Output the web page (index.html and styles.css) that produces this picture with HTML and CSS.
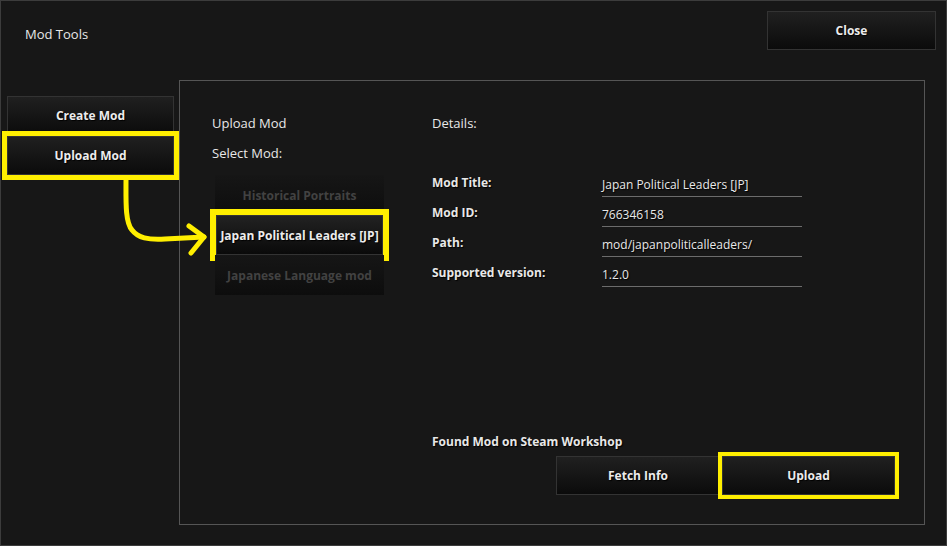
FILE: index.html
```html
<!DOCTYPE html>
<html lang="en">
<head>
    <meta charset="UTF-8">
    <title>Mod Tools</title>
    <link rel="stylesheet" href="styles.css">
</head>
<body>
    <div class="window">
        <div class="top-bar">
            <span class="title">Mod Tools</span>
            <button class="btn close-btn">Close</button>
        </div>

        <div class="main">
            <div class="sidebar">
                <button class="btn side-btn">Create Mod</button>
                <button class="btn side-btn marked">Upload Mod</button>
            </div>

            <div class="panel">
                <div class="select-col">
                    <p class="heading">Upload Mod</p>
                    <p class="heading sub">Select Mod:</p>
                    <div class="mod-list">
                        <button class="btn mod-btn dim">Historical Portraits</button>
                        <button class="btn mod-btn marked-list">Japan Political Leaders [JP]</button>
                        <button class="btn mod-btn dim">Japanese Language mod</button>
                    </div>
                </div>

                <div class="details-col">
                    <p class="heading">Details:</p>
                    <div class="fields">
                        <div class="field">
                            <span class="label">Mod Title:</span>
                            <span class="value">Japan Political Leaders [JP]</span>
                        </div>
                        <div class="field">
                            <span class="label">Mod ID:</span>
                            <span class="value">766346158</span>
                        </div>
                        <div class="field">
                            <span class="label">Path:</span>
                            <span class="value">mod/japanpoliticalleaders/</span>
                        </div>
                        <div class="field">
                            <span class="label">Supported version:</span>
                            <span class="value">1.2.0</span>
                        </div>
                    </div>

                    <div class="footer">
                        <span class="label">Found Mod on Steam Workshop</span>
                        <div class="actions">
                            <button class="btn action-btn">Fetch Info</button>
                            <button class="btn action-btn marked-upload">Upload</button>
                        </div>
                    </div>
                </div>
            </div>
        </div>

        <!-- hand drawn arrow from the sidebar to the selected mod -->
        <svg class="arrow" width="947" height="546" viewBox="0 0 947 546">
            <path d="M126 180 C126 200 125 222 132 230 C138 238 148 240 165 239 L204 237" fill="none" stroke="#ffef00" stroke-width="5" stroke-linecap="round" stroke-linejoin="round"/>
            <path d="M189 226 L204 237 L191 253" fill="none" stroke="#ffef00" stroke-width="5" stroke-linecap="round" stroke-linejoin="round"/>
        </svg>
    </div>
</body>
</html>
```

FILE: styles.css
```css
body {
    margin: 0;
    background-color: #161616;
    font-family: "Open Sans", "DejaVu Sans", sans-serif;
    color: #e8e8e8;
}

p {
    margin: 0;
}

.window {
    position: relative;
    width: 947px;
    height: 546px;
    box-sizing: border-box;
    border: 1px solid #3c3c3c;
    background-color: #171717;
    display: flex;
    flex-direction: column;
}

.top-bar {
    display: flex;
    justify-content: space-between;
    align-items: flex-start;
    padding: 10px 10px 0 24px;
    height: 79px;
    box-sizing: border-box;
}

.title {
    font-size: 13px;
    margin-top: 14px;
}

.btn {
    font-family: inherit;
    font-weight: bold;
    font-size: 12px;
    color: #ececec;
    text-shadow: 1px 1px 1px #000;
    border: 1px solid #333;
    background: linear-gradient(#202020, #0b0b0b);
    padding: 0;
    height: 39px;
    cursor: pointer;
}

.close-btn {
    width: 169px;
}

.main {
    display: flex;
    align-items: flex-start;
    flex: 1;
}

.sidebar {
    display: flex;
    flex-direction: column;
    gap: 1px;
    width: 167px;
    margin: 16px 5px 0 6px;
}

.side-btn {
    width: 167px;
}

.marked {
    outline: 5px solid #ffef00;
}

.panel {
    display: flex;
    width: 746px;
    height: 445px;
    box-sizing: border-box;
    border: 1px solid #555;
    padding: 34px 29px 29px 32px;
}

.heading {
    font-size: 13px;
    line-height: 16px;
}

.heading.sub {
    margin-top: 14px;
}

.select-col {
    width: 220px;
}

.mod-list {
    display: flex;
    flex-direction: column;
    width: 169px;
    margin: 14px 0 0 3px;
    background-color: #111;
}

.mod-btn {
    height: 40px;
    border: none;
    background: linear-gradient(#161616, #0d0d0d);
}

.mod-btn.dim {
    color: #424242;
    text-shadow: none;
}

.marked-list {
    border: 1px solid #333;
    background: linear-gradient(#222, #0a0a0a);
    outline: 6px solid #ffef00;
    outline-offset: 0;
    margin: 0 1px;
}

.details-col {
    flex: 1;
    display: flex;
    flex-direction: column;
}

.fields {
    margin-top: 44px;
    display: flex;
    flex-direction: column;
}

.field {
    display: flex;
    align-items: flex-start;
    height: 30px;
}

.label {
    font-size: 12px;
    font-weight: bold;
    text-shadow: 1px 1px 1px #000;
    width: 170px;
    line-height: 16px;
}

.value {
    width: 200px;
    font-size: 12px;
    line-height: 16px;
    padding: 2px 0 3px;
    border-bottom: 1px solid #6c6c6c;
    text-shadow: 1px 1px 1px #000;
}

.footer {
    margin-top: auto;
    display: flex;
    flex-direction: column;
}

.footer .label {
    width: auto;
}

.actions {
    display: flex;
    justify-content: flex-end;
    gap: 2px;
    margin-top: 6px;
}

.action-btn {
    width: 164px;
}

.marked-upload {
    width: 173px;
    outline: 4px solid #ffef00;
}

.arrow {
    position: absolute;
    left: -1px;
    top: -1px;
    pointer-events: none;
}
```
